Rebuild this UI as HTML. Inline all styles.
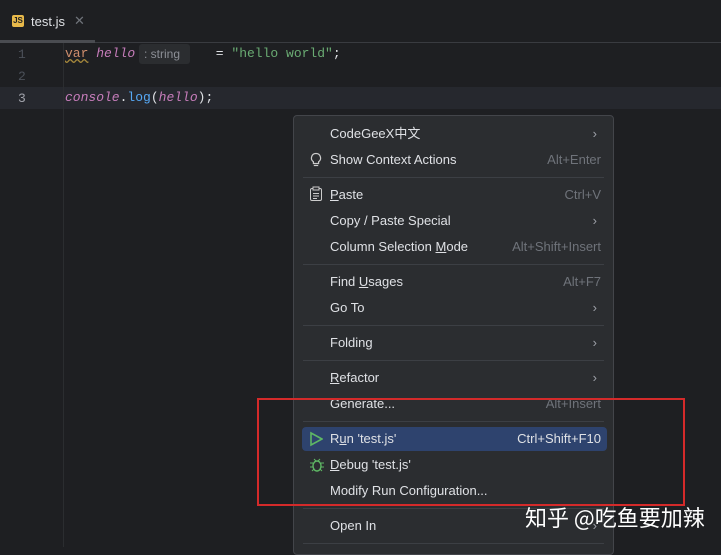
<!DOCTYPE html>
<html><head><meta charset="utf-8"><style>
*{margin:0;padding:0;box-sizing:border-box}
body{width:721px;height:547px;background:#1e1f22;position:relative;overflow:hidden;font-family:"Liberation Sans","Noto Sans CJK SC",sans-serif;color:#dfe1e5}
.abs{position:absolute}
.tabbar{left:0;top:0;width:721px;height:43px;background:#1e1f22;border-bottom:1px solid #393b40}
.code{font-family:"Liberation Mono",monospace;font-size:13px;white-space:pre}
.ln{font-family:"Liberation Mono",monospace;font-size:13px;color:#4b5059;left:18px}
.menu{left:293px;top:115px;width:321px;height:440px;background:#2b2d30;border:1px solid #43454a;border-radius:4px}
.it{position:absolute;left:36px;font-size:13px;color:#dfe1e5;line-height:16px}
.sc{position:absolute;right:12px;font-size:13px;color:#6f737a;line-height:16px}
.ar{position:absolute;right:16px;font-size:13px;color:#9da0a8;line-height:16px}
.sep{position:absolute;left:9px;right:9px;height:1px;background:#3c3f44}
u{text-decoration:underline}
</style></head><body>
<div class="abs tabbar"></div>
<div class="abs" style="left:12px;top:15px;width:12px;height:12px;background:#e8b94a;border-radius:2px;font-size:8px;color:#1e1f22;font-weight:bold;text-align:center;line-height:12px">JS</div>
<div class="abs" style="left:31px;top:14px;font-size:13px;color:#dfe1e5">test.js</div>
<div class="abs" style="left:74px;top:13px;font-size:13px;color:#6f737a">✕</div>
<div class="abs" style="left:0;top:40px;width:95px;height:3px;background:#4a4c51"></div>
<div class="abs" style="left:0;top:87px;width:721px;height:22px;background:#26282e"></div>
<div class="abs" style="left:63px;top:43px;width:1px;height:504px;background:#2b2d30"></div>
<div class="abs ln" style="top:47px">1</div>
<div class="abs ln" style="top:69px">2</div>
<div class="abs ln" style="top:91px;color:#a1a3ab">3</div>
<div class="abs code" style="left:65px;top:46px"><span style="color:#cf8e6d;text-decoration:underline wavy #a7893c">var</span> <span style="color:#c77dbb;font-style:italic">hello</span></div>
<div class="abs" style="left:139px;top:44px;width:51px;height:20px;background:#2b2d30;border-radius:3px;font-size:12px;color:#8c8f96;padding:3px 0 0 5px">: string</div>
<div class="abs code" style="left:208px;top:46px"> = <span style="color:#6aab73">"hello world"</span>;</div>
<div class="abs code" style="left:65px;top:90px"><span style="color:#c77dbb;font-style:italic">console</span>.<span style="color:#56a8f5">log</span>(<span style="color:#c77dbb;font-style:italic">hello</span>);</div>

<div class="abs menu">
<div class="it" style="top:10px">CodeGeeX中文</div><div class="ar" style="top:10px">›</div>
<svg class="abs" style="left:16px;top:36px" width="12" height="16"><path d="M6 1.5a4.5 4.5 0 0 0-2.6 8.2V11.5h5.2V9.7A4.5 4.5 0 0 0 6 1.5Z" fill="none" stroke="#ccc" stroke-width="1.2"/><path d="M3.8 13.5h4.4" stroke="#ccc" stroke-width="1.2"/></svg>
<div class="it" style="top:36px">Show Context Actions</div><div class="sc" style="top:36px">Alt+Enter</div>
<div class="sep" style="top:61px"></div>
<svg class="abs" style="left:15px;top:70px" width="14" height="16"><rect x="1.5" y="2.5" width="11" height="12" rx="1.5" fill="none" stroke="#ccc"/><rect x="4" y="1" width="6" height="3" fill="#2b2d30" stroke="#ccc"/><path d="M4 7.5h6M4 10h6M4 12.5h4" stroke="#ccc"/></svg>
<div class="it" style="top:71px"><u>P</u>aste</div><div class="sc" style="top:71px">Ctrl+V</div>
<div class="it" style="top:97px">Copy / Paste Special</div><div class="ar" style="top:97px">›</div>
<div class="it" style="top:123px">Column Selection <u>M</u>ode</div><div class="sc" style="top:123px">Alt+Shift+Insert</div>
<div class="sep" style="top:148px"></div>
<div class="it" style="top:158px">Find <u>U</u>sages</div><div class="sc" style="top:158px">Alt+F7</div>
<div class="it" style="top:184px">Go To</div><div class="ar" style="top:184px">›</div>
<div class="sep" style="top:209px"></div>
<div class="it" style="top:219px">Folding</div><div class="ar" style="top:219px">›</div>
<div class="sep" style="top:244px"></div>
<div class="it" style="top:254px"><u>R</u>efactor</div><div class="ar" style="top:254px">›</div>
<div class="it" style="top:280px">Generate...</div><div class="sc" style="top:280px">Alt+Insert</div>
<div class="sep" style="top:305px"></div>
<div class="abs" style="left:8px;top:311px;width:305px;height:24px;background:#2e436e;border-radius:4px"></div>
<svg class="abs" style="left:15px;top:315px" width="14" height="16"><path d="M2 2L13 8L2 14Z" fill="none" stroke="#5fb865" stroke-width="1.6"/></svg>
<div class="it" style="top:315px">R<u>u</u>n 'test.js'</div><div class="sc" style="top:315px;color:#dfe1e5">Ctrl+Shift+F10</div>
<svg class="abs" style="left:15px;top:341px" width="16" height="16"><ellipse cx="8" cy="9" rx="4" ry="5" fill="none" stroke="#5fb865" stroke-width="1.4"/><path d="M1 6h3M12 6h3M1 10h3M12 10h3M3 14l2-2M13 14l-2-2M5 2l2 2M11 2l-2 2" stroke="#5fb865"/></svg>
<div class="it" style="top:341px"><u>D</u>ebug 'test.js'</div>
<div class="it" style="top:367px">Modify Run Configuration...</div>
<div class="sep" style="top:392px"></div>
<div class="it" style="top:402px">Open In</div><div class="ar" style="top:402px">›</div>
<div class="sep" style="top:427px"></div>
</div>
<div class="abs" style="left:257px;top:398px;width:428px;height:108px;border:2px solid #d42a2a"></div>
<div class="abs" style="left:525px;top:501px;font-size:22px;color:#fff;font-family:'Noto Sans CJK SC',sans-serif">知乎 @吃鱼要加辣</div>
</body></html>
